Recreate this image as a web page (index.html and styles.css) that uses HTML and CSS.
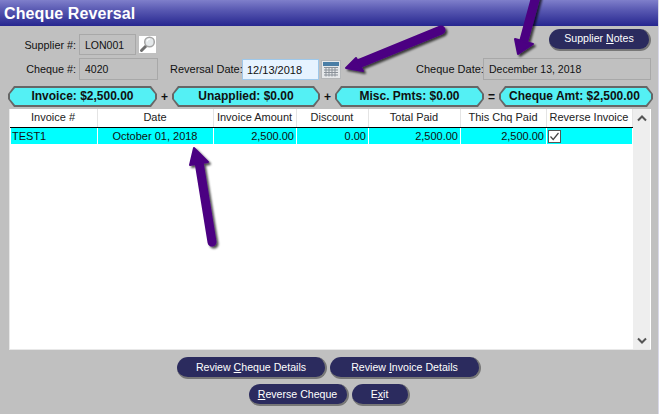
FILE: index.html
```html
<!DOCTYPE html>
<html lang="en">
<head>
<meta charset="utf-8">
<title>Cheque Reversal</title>
<link rel="stylesheet" href="styles.css">
</head>
<body>
<div class="window">
  <header class="titlebar">Cheque Reversal</header>
  <section class="form">
    <div class="row row-one">
      <label class="label label-main">Supplier #:</label>
      <div class="field field-supplier">LON001</div>
      <div class="lookup">
        <svg width="17" height="17" viewBox="0 0 17 17"><rect width="17" height="17" fill="#fff"/><path d="M2.500 14.500 L7 10" stroke="#6f6f6f" stroke-width="3" stroke-linecap="round"/><circle cx="10.500" cy="6" r="4.800" fill="#e4e8ea" stroke="#a5a5a5" stroke-width="1.500"/><path d="M8 5.500 A3 3 0 0 1 11 3" fill="none" stroke="#fff" stroke-width="1.200"/></svg>
      </div>
      <button class="btn btn-notes">Supplier <u>N</u>otes</button>
    </div>
    <div class="row row-two">
      <label class="label label-main">Cheque #:</label>
      <div class="field field-cheque">4020</div>
      <label class="label label-reversal">Reversal Date:</label>
      <div class="date-input">12/13/2018</div>
      <div class="calendar">
        <svg width="20" height="19" viewBox="0 0 20 19"><rect x=".5" y=".5" width="19" height="18" fill="#e6e8ea" stroke="#b4b6b8"/><rect x="2" y="2" width="16" height="4" fill="#4a7ea6"/><path d="M3 7.500h14M3 10h14M3 12.500h14M3 15h14M5 7v9.500M8 7v9.500M11 7v9.500M14 7v9.500" stroke="#8b929a" stroke-width="1"/></svg>
      </div>
      <label class="label label-chqdate">Cheque Date:</label>
      <div class="field field-date">December 13, 2018</div>
    </div>
    <div class="row row-totals">
      <div class="pill pill-invoice"><span>Invoice: $2,500.00</span></div>
      <b class="op">+</b>
      <div class="pill pill-unapplied"><span>Unapplied: $0.00</span></div>
      <b class="op">+</b>
      <div class="pill pill-misc"><span>Misc. Pmts: $0.00</span></div>
      <b class="op">=</b>
      <div class="pill pill-amt"><span>Cheque Amt: $2,500.00</span></div>
    </div>
  </section>
  <section class="grid-wrap">
    <div class="grid">
      <div class="thead">
        <div class="cell c1">Invoice #</div>
        <div class="cell c2">Date</div>
        <div class="cell c3">Invoice Amount</div>
        <div class="cell c4">Discount</div>
        <div class="cell c5">Total Paid</div>
        <div class="cell c6">This Chq Paid</div>
        <div class="cell c7">Reverse Invoice</div>
      </div>
      <div class="trow">
        <div class="cell c1 left">TEST1</div>
        <div class="cell c2">October 01, 2018</div>
        <div class="cell c3 right">2,500.00</div>
        <div class="cell c4 right">0.00</div>
        <div class="cell c5 right">2,500.00</div>
        <div class="cell c6 right">2,500.00</div>
        <div class="cell c7 left"><span class="check"><svg width="13" height="13" viewBox="0 0 13 13"><rect x=".5" y=".5" width="12" height="12" fill="#fff" stroke="#555"/><path d="M2.500 6.500 L5.200 9.500 L10.500 3" fill="none" stroke="#444" stroke-width="1.200"/></svg></span></div>
      </div>
    </div>
    <div class="scrollbar">
      <svg width="10" height="7" viewBox="0 0 10 7"><path d="M1 5.500 L5 1.500 L9 5.500" fill="none" stroke="#555" stroke-width="2"/></svg>
      <svg width="10" height="7" viewBox="0 0 10 7"><path d="M1 1.500 L5 5.500 L9 1.500" fill="none" stroke="#555" stroke-width="2"/></svg>
    </div>
  </section>
  <footer class="actions">
    <div class="action-row">
      <button class="btn btn-cheque">Review <u>C</u>heque Details</button>
      <button class="btn btn-invoice">Review <u>I</u>nvoice Details</button>
    </div>
    <div class="action-row">
      <button class="btn btn-reverse"><u>R</u>everse Cheque</button>
      <button class="btn btn-exit">E<u>x</u>it</button>
    </div>
  </footer>
  <svg class="arrows" width="659" height="414" viewBox="0 0 659 414">
    <defs><filter id="sh" x="-30%" y="-30%" width="160%" height="160%"><feDropShadow dx="2" dy="2" stdDeviation="1.300" flood-color="#000" flood-opacity=".7"/></filter></defs>
    <g filter="url(#sh)" fill="#4b0082" stroke="#4b0082" stroke-linejoin="round" stroke-linecap="round">
      <path d="M536 -4 L523 44" fill="none" stroke-width="9"/>
      <path d="M518 54 L515 39 L533 44 Z" stroke-width="2"/>
      <path d="M441 30 L358 64" fill="none" stroke-width="9"/>
      <path d="M346 68 L356 58 L363 71 Z" stroke-width="2"/>
      <path d="M212 242 L199 162" fill="none" stroke-width="9"/>
      <path d="M194 148 L190 165 L208 162 Z" stroke-width="2"/>
    </g>
  </svg>
</div>
</body>
</html>
```
FILE: styles.css
```css
* { box-sizing: border-box; }
html, body { margin: 0; padding: 0; }
body { width: 659px; height: 414px; overflow: hidden; background: #c0c0c0; font-family: "Liberation Sans", Arial, sans-serif; font-size: 11px; color: #111; }
.window { position: relative; width: 659px; height: 414px; border-right: 1px solid #d8d8e8; }
.titlebar { height: 26px; padding: 2px 0 0 4px; background: linear-gradient(#7f7fcb, #5c5cb4 35%, #26268f); color: #fff; font-size: 16px; font-weight: bold; line-height: 24px; letter-spacing: .1px; }
.form { padding: 3px 0 0 0; }
.row { display: flex; align-items: center; position: relative; }
.row-one { height: 26px; padding-top: 5px; }
.row-two { height: 22px; margin-top: 3px; }
.label { display: block; white-space: nowrap; }
.label-main { width: 76px; text-align: right; font-size: 10.800px; }
.field { background: #c0c0c0; border: 1px solid #a8a8a8; height: 22px; line-height: 21px; padding-left: 5px; margin-left: 3px; font-size: 10.500px; }
.field-supplier { width: 57px; height: 21px; }
.lookup { margin-left: 3px; height: 17px; }
.lookup svg, .calendar svg { display: block; }
.btn-notes { margin-left: 393px; margin-top: -10px; width: 102px; height: 23px; }
.field-cheque { width: 79px; }
.label-reversal { width: 70px; margin-left: 12px; text-align: right; }
.date-input { width: 77px; height: 21px; line-height: 20px; margin-left: 2px; padding-left: 4px; background: #e6f3ff; border: 1px solid #9ec8ea; }
.calendar { margin-left: 2px; height: 19px; }
.label-chqdate { margin-left: 75px; width: 66px; text-align: right; }
.field-date { width: 168px; margin-left: 1px; }
.row-totals { margin-top: 6px; height: 21px; padding-left: 8px; }
.pill { position: relative; height: 21px; background: #666; font-size: 12px; font-weight: bold; text-align: center; line-height: 20px; clip-path: polygon(0 38%, 6px 0, calc(100% - 6px) 0, 100% 38%, 100% 62%, calc(100% - 6px) 100%, 6px 100%, 0 62%); }
.pill::before { content: ""; position: absolute; inset: 2px; background: #54f0f4; clip-path: polygon(0 36%, 5px 0, calc(100% - 5px) 0, 100% 36%, 100% 64%, calc(100% - 5px) 100%, 5px 100%, 0 64%); }
.pill span { position: relative; }
.pill-invoice { width: 149px; }
.pill-unapplied { width: 148px; }
.pill-misc { width: 149px; }
.pill-amt { width: 154px; padding-right: 3px; }
.op { width: 15px; text-align: center; font-size: 12px; }
.grid-wrap { display: flex; margin: 2px 0 0 9px; width: 642px; height: 241px; background: #fff; border-left: 1px solid #e8e8e8; border-bottom: 1px solid #e8e8e8; }
.grid { width: 623px; }
.thead { display: flex; height: 19px; border-bottom: 1px solid #000; }
.thead .cell { border-right: 1px solid #e4e4e4; color: #222; }
.trow { display: flex; width: 621px; height: 16px; background: #00ffff; margin-left: 1px; }
.trow .cell { border-right: 1px solid #fff; }
.cell { text-align: center; line-height: 17px; white-space: nowrap; padding: 0 2px 0 1px; }
.trow .cell { line-height: 16px; }
.c1 { width: 88px; }
.c2 { width: 116px; }
.c3 { width: 83px; }
.c4 { width: 72px; }
.c5 { width: 92px; }
.c6 { width: 86px; }
.c7 { width: 86px; }
.trow .c1 { width: 87px; }
.trow .c7 { width: 85px; border-right: 0; }
.left { text-align: left; }
.right { text-align: right; }
.check { display: block; height: 13px; margin-top: 2px; }
.check svg { display: block; }
.scrollbar { width: 17px; background: #eeeeee; display: flex; flex-direction: column; justify-content: space-between; align-items: center; padding: 6px 0 5px; }
.actions { display: flex; flex-direction: column; align-items: center; gap: 5px; margin-top: 7px; }
.action-row { display: flex; gap: 3px; }
.btn { display: block; height: 22px; padding: 0 0 1px; background: #2b2b5e; color: #fff; border: 0; border-right: 2px solid #777; border-bottom: 2px solid #777; border-radius: 11px; font-family: "Liberation Sans", Arial, sans-serif; font-size: 10.600px; text-align: center; }
.btn-cheque { width: 150px; }
.btn-invoice { width: 151px; }
.btn-reverse { width: 100px; }
.btn-exit { width: 58px; }
.arrows { position: absolute; left: 0; top: 0; pointer-events: none; }
```
